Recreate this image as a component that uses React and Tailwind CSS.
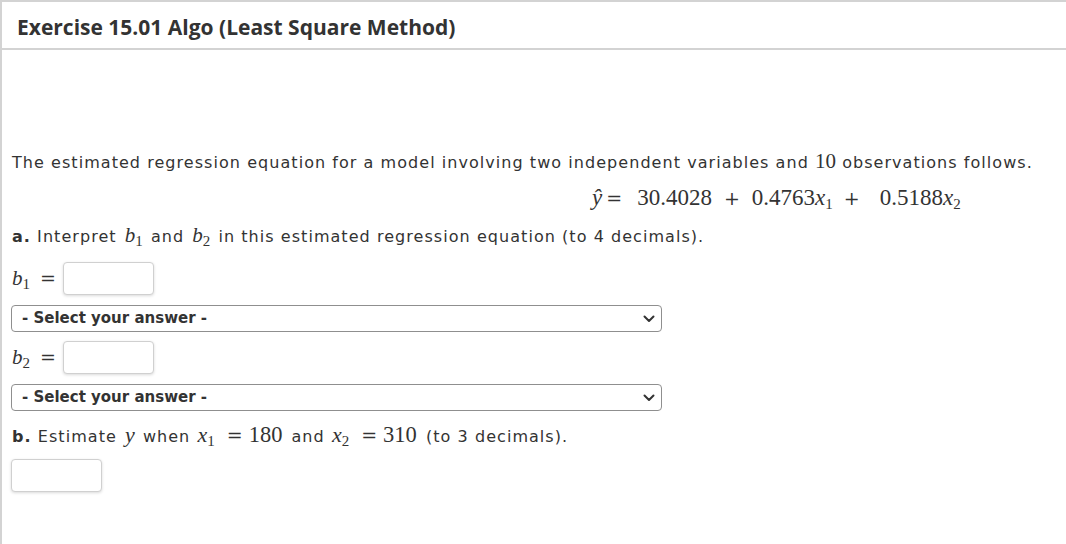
import React from "react";

const serif = "font-['Liberation_Serif',serif]";

const N = ({ children, className = "" }) => (
  <span className={serif + " text-[21px] not-italic tracking-normal " + className}>{children}</span>
);
const Op = ({ children, className = "" }) => (
  <span className={"font-['DejaVu_Serif',serif] text-[19px] not-italic tracking-normal " + className}>{children}</span>
);
const V = ({ children, sub, className = "" }) => (
  <span className={serif + " text-[21px] tracking-normal " + className}>
    <i>{children}</i>
    {sub && <span className="text-[15px] relative top-[4px] not-italic">{sub}</span>}
  </span>
);

function Chevron() {
  return (
    <svg width="12" height="8" viewBox="0 0 12 8" className="shrink-0">
      <path d="M1.5 1.5 L6 6 L10.5 1.5" fill="none" stroke="#333" strokeWidth="2" strokeLinecap="round" strokeLinejoin="round" />
    </svg>
  );
}

function Select({ className = "" }) {
  return (
    <div className={"w-[651px] h-[27px] ml-[9px] rounded-[4px] border border-[#8f8f8f] bg-white flex items-center justify-between pl-[10px] pr-[6px] " + className}>
      <span className="font-['DejaVu_Sans',sans-serif] font-bold text-[15px] text-[#333] tracking-normal">- Select your answer -</span>
      <Chevron />
    </div>
  );
}

function Input({ className = "" }) {
  return (
    <div className={"w-[91px] h-[33px] rounded-[4px] border border-[#d0d0d0] bg-white shadow-[0_1px_3px_rgba(0,0,0,0.15)] " + className} />
  );
}

export default function App() {
  return (
    <div className="w-[1066px] h-[544px] bg-white text-[#333] border-t-2 border-l-2 border-[#d3d3d3] overflow-hidden">
      <div className="h-[48px] border-b-2 border-[#d3d3d3] flex items-center pl-[15px] pt-[6px]">
        <h1 className="font-['Open_Sans',sans-serif] font-bold text-[21px] text-[#333]">Exercise 15.01 Algo (Least Square Method)</h1>
      </div>
      <div className="font-['DejaVu_Sans',sans-serif] text-[16px] tracking-[1.05px] text-[#333]">
        <p className="mt-[98px] pl-[10px] h-[26px] leading-[26px] whitespace-nowrap">
          The estimated regression equation for a model involving two independent variables and <N>10</N> observations follows.
        </p>
        <div className="h-[48px] leading-[48px] pl-[590px] tracking-normal whitespace-nowrap">
          <V className="mr-[4px] text-[23px]">ŷ</V>
          <Op className="mr-[15px]">=</Op>
          <N className="text-[23px] mr-[12px]">30.4028</N>
          <Op className="mr-[12px]">+</Op>
          <N className="text-[23px]">0.4763</N>
          <V sub="1" className="mr-[11px] text-[23px]">x</V>
          <Op className="mr-[20px]">+</Op>
          <N className="text-[23px]">0.5188</N>
          <V sub="2" className="text-[23px]">x</V>
        </div>
        <p className="h-[26px] leading-[26px] pl-[10px] whitespace-nowrap">
          <b>a.</b> Interpret <V sub="1" className="mx-[2px]">b</V> and <V sub="2" className="mx-[2px]">b</V> in this estimated regression equation (to 4 decimals).
        </p>
        <div className="flex items-center pl-[10px] h-[33px] mt-[14px] tracking-normal">
          <V sub="1">b</V>
          <Op className="ml-[10px] mr-[7px]">=</Op>
          <Input />
        </div>
        <Select className="mt-[10px]" />
        <div className="flex items-center pl-[10px] h-[33px] mt-[9px] tracking-normal">
          <V sub="2">b</V>
          <Op className="ml-[10px] mr-[7px]">=</Op>
          <Input />
        </div>
        <Select className="mt-[10px]" />
        <p className="h-[36px] leading-[36px] pl-[10px] mt-[6px] whitespace-nowrap">
          <b>b.</b> Estimate <V className="mx-[2px] text-[22px]">y</V> when <V sub="1" className="mx-[1px] text-[22px]">x</V><Op className="ml-[11px] mr-[6px]">=</Op><N className="text-[22.5px] mr-[3px]">180</N> and <V sub="2" className="mx-[1px] text-[22px]">x</V><Op className="ml-[11px] mr-[6px]">=</Op><N className="text-[22.5px] mr-[3px]">310</N> (to 3 decimals).
        </p>
        <Input className="ml-[9px] mt-[6px]" />
      </div>
    </div>
  );
}
